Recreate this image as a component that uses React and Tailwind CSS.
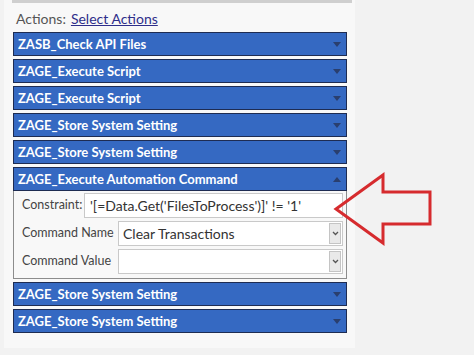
const font = { fontFamily: 'Lato, "Open Sans", sans-serif' };

const Bar = ({ title, open }) => (
  <div className="flex h-[24px] items-center justify-between border border-[#1e2c52] bg-[#3569c2] pl-[4px] pr-[5px]">
    <span className="whitespace-nowrap text-[13px] font-bold leading-none text-white">{title}</span>
    <svg width="8" height="5" viewBox="0 0 8 5">
      {open ? (
        <path d="M0 5 L4 0 L8 5 Z" fill="#2a3f6e" />
      ) : (
        <path d="M0 0 L8 0 L4 5 Z" fill="#2a3f6e" />
      )}
    </svg>
  </div>
);

const SelectBox = ({ value }) => (
  <div className="flex h-[25px] flex-1 items-center border border-[#c9c9c9] bg-white">
    <span className="flex-1 whitespace-nowrap pl-[4px] text-[14px] text-[#333]">{value}</span>
    <div className="mr-[1px] flex h-[21px] w-[12px] items-center justify-center border border-[#c4c4c4] bg-[#e9e9e9]">
      <svg width="7" height="5" viewBox="0 0 7 5">
        <path d="M1 1 L3.5 3.5 L6 1" stroke="#555" strokeWidth="1.3" fill="none" />
      </svg>
    </div>
  </div>
);

export default function App() {
  return (
    <div className="relative h-[355px] w-[474px] overflow-hidden bg-[#f2f2f2]" style={font}>
      <div className="ml-[4px] h-[348px] w-[351px] bg-[#f8f8f8]">
        <div className="ml-[8px] h-[3px] w-[340px] bg-[#cfcfcf]" />
        <div className="mt-[7px] flex h-[16px] items-center whitespace-nowrap pl-[12px] text-[14px] text-[#555]">
          <span>Actions:</span>
          <span className="ml-[5px] text-[#2e2e8a] underline">Select Actions</span>
        </div>
        <div className="ml-[9px] mt-[6px] flex w-[334px] flex-col gap-[3px]">
          <Bar title="ZASB_Check API Files" />
          <Bar title="ZAGE_Execute Script" />
          <Bar title="ZAGE_Execute Script" />
          <Bar title="ZAGE_Store System Setting" />
          <Bar title="ZAGE_Store System Setting" />
          <div>
            <Bar title="ZAGE_Execute Automation Command" open />
            <div className="flex flex-col gap-[3px] border border-t-0 border-[#8c8c8c] pb-[4px] pl-[8px] pr-[3px] pt-[2px] text-[12.5px] text-[#444]">
              <div className="flex items-center gap-[4px]">
                <span className="w-[58px] shrink-0 whitespace-nowrap">Constraint:</span>
                <div className="flex h-[25px] flex-1 items-center whitespace-nowrap border border-[#c9c9c9] bg-white pl-[5px] text-[14px] text-[#333]">
                  '[=Data.Get('FilesToProcess')]' != '1'
                </div>
              </div>
              <div className="flex items-center gap-[4px]">
                <span className="w-[92px] shrink-0 whitespace-nowrap">Command Name</span>
                <SelectBox value="Clear Transactions" />
              </div>
              <div className="flex items-center gap-[4px]">
                <span className="w-[92px] shrink-0 whitespace-nowrap">Command Value</span>
                <SelectBox value="" />
              </div>
            </div>
          </div>
          <Bar title="ZAGE_Store System Setting" />
          <Bar title="ZAGE_Store System Setting" />
        </div>
      </div>
      <svg className="absolute left-0 top-0" width="474" height="355">
        <polygon
          points="336,209 383,175 383,192 430,192 430,224 383,224 383,243"
          fill="none"
          stroke="#d62b2e"
          strokeWidth="3"
          strokeLinejoin="miter"
        />
      </svg>
    </div>
  );
}
